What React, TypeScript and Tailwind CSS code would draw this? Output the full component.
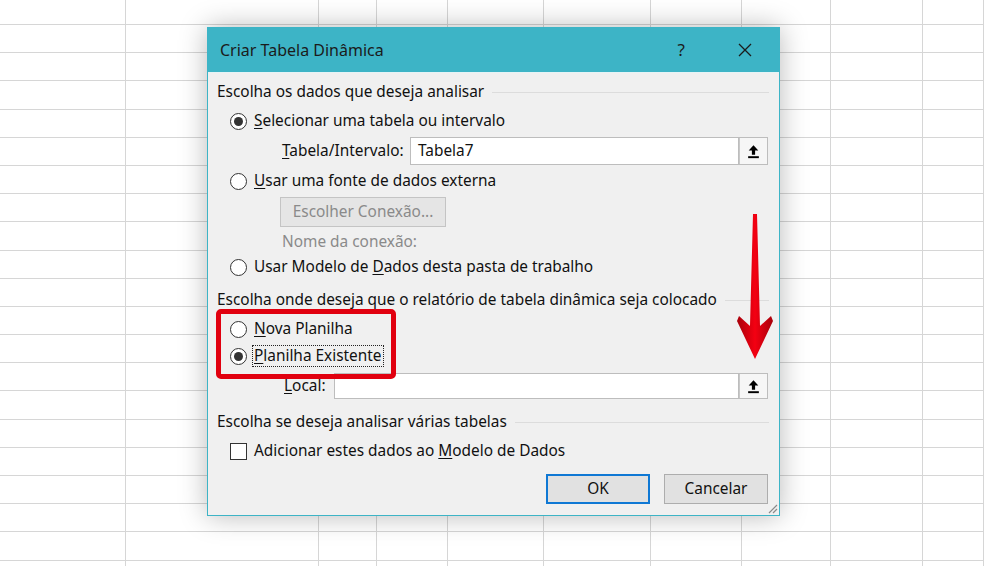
import React from "react";

const colW = [
  "w-[126px]",
  "w-[193px]",
  "w-[58px]",
  "w-[71px]",
  "w-[96px]",
  "w-[107px]",
  "w-[91px]",
  "w-[89px]",
  "w-[92px]",
  "flex-1",
];

function GridRow({ first }: { first?: boolean }) {
  return (
    <div className={`flex border-b border-[#d6d6d6] ${first ? "h-[25px]" : "h-[28.2px]"}`}>
      {colW.map((w, i) => (
        <div key={i} className={`${w} shrink-0 border-r border-[#d6d6d6]`} />
      ))}
    </div>
  );
}

function Radio({ checked }: { checked?: boolean }) {
  return (
    <div className="w-[17px] h-[17px] rounded-full border border-[#333] bg-white flex items-center justify-center shrink-0">
      {checked && <div className="w-[9px] h-[9px] rounded-full bg-[#333]" />}
    </div>
  );
}

function GroupHeader({ children, className = "" }: { children: React.ReactNode; className?: string }) {
  return (
    <div className={`flex items-center h-[22px] pl-[9px] pr-[10px] ${className}`}>
      <span className="whitespace-nowrap">{children}</span>
      <div className="flex-1 h-px bg-[#dcdcdc] ml-[8px]" />
    </div>
  );
}

function RefButton() {
  return (
    <div className="w-[28px] h-full border-l border-[#c8c8c8] bg-[#f6f6f6] flex items-center justify-center outline outline-1 outline-[#bdbdbd]">
      <svg width="15" height="15" viewBox="0 0 14 14">
        <path d="M7 1.2 L2.5 6 H5.5 V10 H8.5 V6 H11.5 Z" fill="#000" />
        <rect x="2" y="11.4" width="10" height="1.8" fill="#000" />
      </svg>
    </div>
  );
}

const U = ({ children }: { children: React.ReactNode }) => (
  <span className="underline underline-offset-2">{children}</span>
);

export default function App() {
  return (
    <div
      className="relative w-[984px] h-[566px] overflow-hidden bg-white text-[15.4px] text-[#111]"
      style={{ fontFamily: '"Noto Sans", "Open Sans", sans-serif' }}
    >
      {/* spreadsheet background */}
      <div className="flex flex-col">
        <GridRow first />
        {Array.from({ length: 20 }).map((_, i) => (
          <GridRow key={i} />
        ))}
      </div>

      {/* dialog */}
      <div className="absolute left-[207px] top-[27px] w-[573px] h-[489px] border border-[#3db4c6] bg-[#3db4c6] shadow-[0_0_26px_rgba(0,0,0,0.28)] flex flex-col">
        <div className="h-[44px] flex items-center pl-[12px] text-[16px] text-[#1b1b1b] shrink-0">
          <span>Criar Tabela Dinâmica</span>
          <span className="ml-auto mr-[52px] text-[17px]">?</span>
          <svg width="16" height="16" viewBox="0 0 16 16" className="mr-[26px]">
            <path d="M2 2 L14 14 M14 2 L2 14" stroke="#1b1b1b" strokeWidth="1.3" />
          </svg>
        </div>
        <div className="flex-1 bg-[#f0f0f0] border-t border-[#e6f4f6] flex flex-col relative">
          <GroupHeader className="mt-[8px]">Escolha os dados que deseja analisar</GroupHeader>

          <div className="flex items-center h-[22px] mt-[7px] pl-[22px] gap-[7px]">
            <Radio checked />
            <span>
              <U>S</U>elecionar uma tabela ou intervalo
            </span>
          </div>

          <div className="flex items-center h-[28px] mt-[5px] pl-[74px] pr-[11px]">
            <span className="w-[128px] shrink-0">
              <U>T</U>abela/Intervalo:
            </span>
            <div className="flex-1 h-full bg-white border border-[#bdbdbd] flex items-center">
              <span className="pl-[7px] flex-1">Tabela7</span>
              <RefButton />
            </div>
          </div>

          <div className="flex items-center h-[22px] mt-[5px] pl-[22px] gap-[7px]">
            <Radio />
            <span>
              <U>U</U>sar uma fonte de dados externa
            </span>
          </div>

          <div className="flex h-[30px] mt-[5px] pl-[72px]">
            <div className="w-[166px] h-full border border-[#c4c4c4] bg-[#e5e5e5] text-[#8a8a8a] flex items-center justify-center">
              Escolher Conexão...
            </div>
          </div>

          <div className="flex items-center h-[20px] mt-[5px] pl-[74px] text-[#8a8a8a]">
            Nome da conexão:
          </div>

          <div className="flex items-center h-[22px] mt-[4px] pl-[22px] gap-[7px]">
            <Radio />
            <span>
              Usar Modelo de <U>D</U>ados desta pasta de trabalho
            </span>
          </div>

          <GroupHeader className="mt-[11px]">
            Escolha onde deseja que o relatório de tabela dinâmica seja colocado
          </GroupHeader>

          <div className="flex items-center h-[22px] mt-[7px] pl-[22px] gap-[7px]">
            <Radio />
            <span>
              <U>N</U>ova Planilha
            </span>
          </div>

          <div className="flex items-center h-[22px] mt-[5px] pl-[22px] gap-[5px]">
            <Radio checked />
            <span className="border border-dotted border-[#222] px-[1px] leading-[20px]">
              <U>P</U>lanilha Existente
            </span>
          </div>

          <div className="flex items-center h-[26px] mt-[6px] pl-[76px] pr-[11px]">
            <span className="w-[50px] shrink-0">
              <U>L</U>ocal:
            </span>
            <div className="flex-1 h-full bg-white border border-[#bdbdbd] flex items-center justify-end">
              <RefButton />
            </div>
          </div>

          <GroupHeader className="mt-[12px]">Escolha se deseja analisar várias tabelas</GroupHeader>

          <div className="flex items-center h-[22px] mt-[7px] pl-[22px] gap-[7px]">
            <div className="w-[17px] h-[17px] border border-[#333] bg-white shrink-0" />
            <span>
              Adicionar estes dados ao <U>M</U>odelo de Dados
            </span>
          </div>

          <div className="flex justify-end h-[30px] mt-[12px] pr-[11px] gap-[14px]">
            <div className="w-[104px] h-full border-2 border-[#0f78d4] bg-[#e1e1e1] flex items-center justify-center">
              OK
            </div>
            <div className="w-[104px] h-full border border-[#adadad] bg-[#e1e1e1] flex items-center justify-center">
              Cancelar
            </div>
          </div>

          {/* resize grip */}
          <svg width="12" height="12" viewBox="0 0 12 12" className="absolute right-[1px] bottom-[1px]">
            <path d="M11 3 L3 11 M11 7 L7 11" stroke="#8a8a8a" strokeWidth="1.2" />
          </svg>
        </div>
      </div>

      {/* red annotation box */}
      <div className="absolute left-[216px] top-[309px] w-[180px] h-[70px] border-[5px] border-[#e1000f] rounded-[5px]" />

      {/* red arrow */}
      <svg width="40" height="150" viewBox="0 0 40 150" className="absolute left-[735px] top-[212px]">
        <defs>
          <linearGradient id="ag" x1="0" x2="1" y1="0" y2="0">
            <stop offset="0" stopColor="#a8000a" />
            <stop offset="0.5" stopColor="#f40012" />
            <stop offset="1" stopColor="#a8000a" />
          </linearGradient>
        </defs>
        <path
          d="M18 2 L22 2 L25 114 L36 104 L38 109 L20 147 L2 109 L4 104 L15 114 Z"
          fill="url(#ag)"
        />
      </svg>
    </div>
  );
}
